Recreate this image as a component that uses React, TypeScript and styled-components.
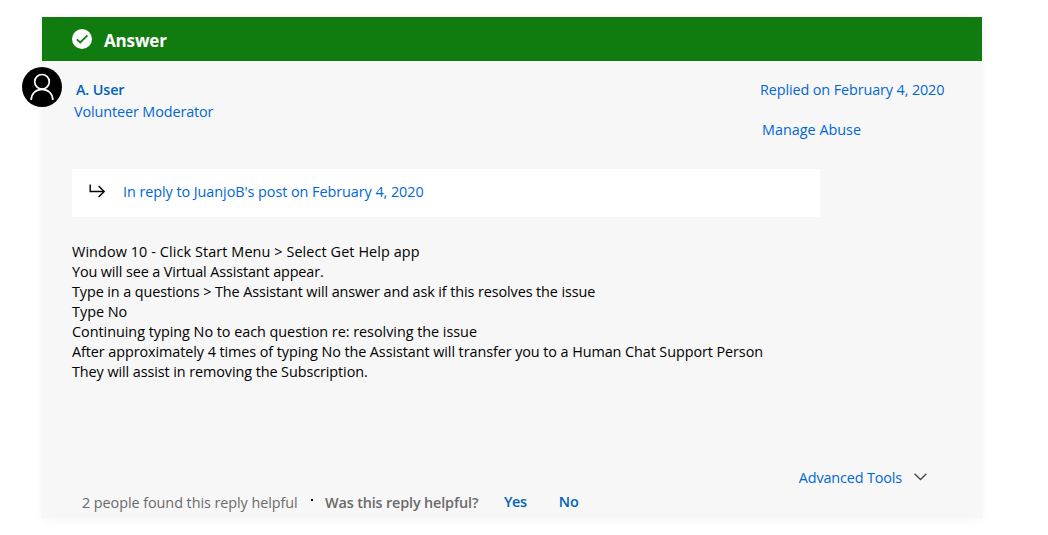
import styled, { createGlobalStyle } from "styled-components";

const GlobalStyle = createGlobalStyle`
  body {
    margin: 0;
    background: #ffffff;
    font-family: "Open Sans", "Noto Sans", sans-serif;
    font-size: 14.4px;
    line-height: 20px;
    color: #000000;
  }
`;

const Page = styled.main`
  box-sizing: border-box;
  height: 535px;
  padding: 17px 66px 0 42px;
  overflow: hidden;
`;

const Card = styled.article`
  height: 501px;
  background: #f7f7f7;
  box-shadow: 0 1px 10px rgba(0, 0, 0, 0.05);
`;

const AnswerBar = styled.header`
  display: flex;
  align-items: center;
  height: 44px;
  padding-left: 30px;
  gap: 12px;
  background: #107c10;
`;

const AnswerTitle = styled.h2`
  margin: 3px 0 0;
  color: #ffffff;
  font-size: 17px;
  font-weight: 700;
  line-height: 24px;
  letter-spacing: -0.15px;
`;

const ReplyHead = styled.div`
  display: flex;
  height: 102px;
  padding: 6px 38px 0 0;
`;

const Avatar = styled.svg`
  flex: none;
  margin-left: -20px;
`;

const Author = styled.div`
  flex: 1;
  display: flex;
  flex-direction: column;
  align-items: flex-start;
  gap: 2px;
  padding: 13px 0 0 12px;
`;

const Meta = styled.div`
  width: 184px;
  display: flex;
  flex-direction: column;
  align-items: flex-start;
  gap: 20px;
  padding-top: 13px;
`;

const Link = styled.a<{ $strong?: boolean; $tracking?: number; $indent?: number }>`
  margin-left: ${({ $indent = 0 }) => $indent}px;
  color: ${({ $strong }) => ($strong ? "#0062b8" : "#0067d6")};
  font-weight: ${({ $strong }) => ($strong ? 600 : 400)};
  letter-spacing: ${({ $tracking = 0 }) => $tracking}px;
  white-space: nowrap;
  cursor: pointer;
`;

const Quote = styled.div`
  display: flex;
  align-items: center;
  box-sizing: border-box;
  width: 748px;
  height: 48px;
  margin-left: 30px;
  padding-bottom: 2px;
  background: #ffffff;
`;

const ReplyArrow = styled.svg`
  margin: -3px 17px 0 17px;
`;

const Message = styled.div`
  height: 226px;
  padding: 25px 0 0 30px;
`;

const Line = styled.p<{ $tracking?: number }>`
  margin: 0;
  letter-spacing: ${({ $tracking = 0 }) => $tracking}px;
  white-space: nowrap;
`;

const Tools = styled.div`
  display: flex;
  justify-content: flex-end;
  align-items: center;
  gap: 12px;
  padding-right: 55px;
`;

const Chevron = styled.svg`
  margin-top: -2px;
`;

const Feedback = styled.footer`
  display: flex;
  align-items: center;
  padding: 5px 0 0 40px;
  color: #6a6a6a;
`;

const Votes = styled.span`
  width: 229px;
  letter-spacing: -0.06px;
  white-space: nowrap;
`;

const Dot = styled.i`
  width: 2px;
  height: 2px;
  margin: -7px 12px 0 0;
  background: #000000;
`;

const Question = styled.span`
  width: 179px;
  font-weight: 600;
  letter-spacing: -0.14px;
  white-space: nowrap;
`;

const Choices = styled.div`
  display: flex;
  gap: 32px;
  margin-top: -2px;
`;

const lines = [
  { text: "Window 10 - Click Start Menu > Select Get Help app", tracking: 0.1 },
  { text: "You will see a Virtual Assistant appear.", tracking: -0.12 },
  {
    text: "Type in a questions > The Assistant will answer and ask if this resolves the issue",
    tracking: -0.095,
  },
  { text: "Type No", tracking: 0 },
  { text: "Continuing typing No to each question re: resolving the issue", tracking: -0.03 },
  {
    text: "After approximately 4 times of typing No the Assistant will transfer you to a Human Chat Support Person",
    tracking: -0.077,
  },
  { text: "They will assist in removing the Subscription.", tracking: -0.08 },
];

export default function App() {
  return (
    <>
      <GlobalStyle />
      <Page>
        <Card>
          <AnswerBar>
            <svg width="20" height="20" viewBox="0 0 20 20">
              <circle cx="10" cy="10" r="10" fill="#ffffff" />
              <path d="M4.8 10.3 8.2 13.4 15.4 6.3" fill="none" stroke="#107c10" strokeWidth="1.8" />
            </svg>
            <AnswerTitle>Answer</AnswerTitle>
          </AnswerBar>

          <ReplyHead>
            <Avatar width="40" height="40" viewBox="0 0 40 40">
              <circle cx="20" cy="20" r="20" fill="#000000" />
              <g fill="none" stroke="#ffffff" strokeWidth="1.7">
                <circle cx="20" cy="14.8" r="7.3" />
                <path d="M9.2 33C9.2 26.6 14 22.3 20 22.3S30.8 26.6 30.8 33" />
              </g>
            </Avatar>
            <Author>
              <Link $strong $indent={2} $tracking={-0.15}>
                A. User
              </Link>
              <Link $tracking={-0.11}>Volunteer Moderator</Link>
            </Author>
            <Meta>
              <Link $tracking={-0.11}>Replied on February 4, 2020</Link>
              <Link $indent={2}>Manage Abuse</Link>
            </Meta>
          </ReplyHead>

          <Quote>
            <ReplyArrow width="17" height="14" viewBox="0 0 17 14" fill="none" stroke="#000000" strokeWidth="1.4">
              <path d="M1.2 0.5V7.5H15" />
              <path d="M9.6 2 15.2 7.5 9.6 13" />
            </ReplyArrow>
            <Link $tracking={-0.055}>In reply to JuanjoB's post on February 4, 2020</Link>
          </Quote>

          <Message>
            {lines.map((line) => (
              <Line key={line.text} $tracking={line.tracking}>
                {line.text}
              </Line>
            ))}
          </Message>

          <Tools>
            <Link $tracking={-0.14}>Advanced Tools</Link>
            <Chevron width="13" height="8" viewBox="0 0 13 8" fill="none" stroke="#4a4a4a" strokeWidth="1.4">
              <path d="M0.6 0.8 6.5 6.6 12.4 0.8" />
            </Chevron>
          </Tools>

          <Feedback>
            <Votes>2 people found this reply helpful</Votes>
            <Dot />
            <Question>Was this reply helpful?</Question>
            <Choices>
              <Link $strong $tracking={-0.4}>
                Yes
              </Link>
              <Link $strong>No</Link>
            </Choices>
          </Feedback>
        </Card>
      </Page>
    </>
  );
}
